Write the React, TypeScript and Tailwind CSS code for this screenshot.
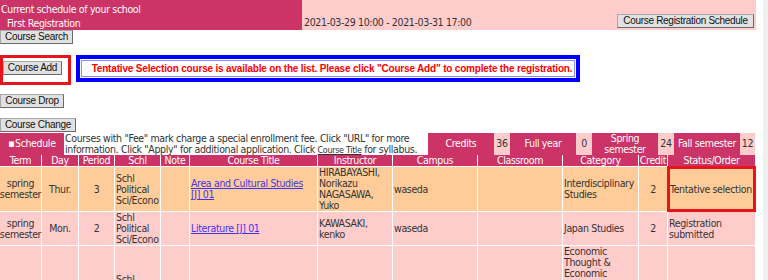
import React from "react";

const FONT = "font-['DejaVu_Sans_Condensed','DejaVu_Sans',sans-serif]";

function Btn({ children, w }: { children: React.ReactNode; w: string }) {
  return (
    <div
      className={`${w} h-[14px] shrink-0 flex items-center justify-center bg-[#e1e1e1] border border-[#a8a8a8] border-r-[#6a6a6a] border-b-[#6a6a6a] text-[10px] leading-[12px] tracking-[-0.3px] text-[#111] whitespace-nowrap font-['Liberation_Sans',Arial,sans-serif]`}
    >
      {children}
    </div>
  );
}

type Align = "c" | "l";

function Cell({
  lines,
  align = "l",
  bg,
  link = false,
  extra = "",
}: {
  lines: string[];
  align?: Align;
  bg: string;
  link?: boolean;
  extra?: string;
}) {
  return (
    <div
      className={`${bg} flex flex-col justify-center ${
        align === "c" ? "items-center text-center" : "items-start pl-[1px]"
      } ${extra}`}
    >
      {lines.map((l, i) => (
        <div
          key={i}
          className={`whitespace-nowrap leading-[11px] ${
            link ? "text-[#4433ee] underline underline-offset-[1px]" : ""
          }`}
        >
          {l}
        </div>
      ))}
    </div>
  );
}

const HEAD = [
  "Term",
  "Day",
  "Period",
  "Schl",
  "Note",
  "Course Title",
  "Instructor",
  "Campus",
  "Classroom",
  "Category",
  "Credit",
  "Status/Order",
];

export default function App() {
  const mag = "bg-[#cc3366]";
  const pink = "bg-[#ffcccc]";
  const orange = "bg-[#ffcc99]";
  return (
    <div
      className={`w-[768px] h-[280px] overflow-hidden bg-white flex ${FONT} text-[10.5px] tracking-[-0.35px] text-[#333]`}
    >
      <div className="w-[756px] shrink-0 flex flex-col">
        {/* top header */}
        <div className="flex h-[30px] shrink-0">
          <div className={`w-[302px] ${mag} text-white`}>
            <div className="leading-[14px] pt-[2px] pl-[1px] whitespace-nowrap">
              Current schedule of your school
            </div>
            <div className="leading-[14px] pl-[7px] whitespace-nowrap">First Registration</div>
          </div>
          <div className={`flex-1 ${pink} flex items-end justify-between pl-[2px] pr-[2px] pb-[2px]`}>
            <span className="leading-[12px] whitespace-nowrap">
              2021-03-29 10:00 - 2021-03-31 17:00
            </span>
            <Btn w="w-[137px]">Course Registration Schedule</Btn>
          </div>
        </div>

        <Btn w="w-[73px]">Course Search</Btn>

        {/* Course add + notice */}
        <div className="flex items-start mt-[11px] h-[30px] shrink-0">
          <div className="w-[71px] h-[30px] border-[3px] border-[#e8141b] pt-[3px]">
            <Btn w="w-[59px]">Course Add</Btn>
          </div>
          <div className="ml-[5px] w-[504px] h-[27px] border-4 border-[#0000ff] p-px">
            <div className="h-full border border-[#8a8aff] flex items-center justify-center">
              <span className="font-['Liberation_Sans',Arial,sans-serif] font-bold text-[#ff0000] text-[10px] tracking-[-0.18px] whitespace-nowrap pl-[8px]">
                Tentative Selection course is available on the list. Please click "Course Add" to
                complete the registration.
              </span>
            </div>
          </div>
        </div>

        <div className="mt-[9px]">
          <Btn w="w-[64px]">Course Drop</Btn>
        </div>
        <div className="mt-[10px]">
          <Btn w="w-[76px]">Course Change</Btn>
        </div>

        {/* schedule row */}
        <div className="flex h-[22px] mt-px shrink-0">
          <div className={`w-[64px] ${mag} text-white flex items-center justify-center whitespace-nowrap`}>
            <span className="text-[7px] mr-px">■</span>Schedule
          </div>
          <div className="w-[364px] flex flex-col justify-center pl-[1px] leading-[11px] whitespace-nowrap">
            <div>Courses with "Fee" mark charge a special enrollment fee. Click "URL" for more</div>
            <div>
              information. Click "Apply" for additional application. Click{" "}
              <span className="underline text-[9px]">Course Title</span> for syllabus.
            </div>
          </div>
          <div className={`w-[66px] ${mag} text-white flex items-center justify-center`}>Credits</div>
          <div className={`w-[16px] ${pink} flex items-center justify-center`}>36</div>
          <div className={`w-[66px] ${mag} text-white flex items-center justify-center`}>Full year</div>
          <div className={`w-[16px] ${pink} flex items-center justify-center`}>0</div>
          <div className={`w-[66px] ${mag} text-white flex flex-col items-center justify-center leading-[11px]`}>
            <div>Spring</div>
            <div>semester</div>
          </div>
          <div className={`w-[16px] ${pink} flex items-center justify-center`}>24</div>
          <div className={`w-[66px] ${mag} text-white flex items-center justify-center whitespace-nowrap`}>
            Fall semester
          </div>
          <div className={`w-[15px] ${pink} flex items-center justify-center`}>12</div>
        </div>

        {/* data grid */}
        <div className="grid grid-cols-[41px_36px_35px_45px_28px_127px_74px_84px_84px_75px_28px_87px] gap-px bg-white w-[755px]">
          {HEAD.map((h) => (
            <div
              key={h}
              className={`${mag} text-white text-center leading-[11px] h-[11px] whitespace-nowrap`}
            >
              {h}
            </div>
          ))}

          {/* row 1 */}
          <Cell bg={orange} align="c" lines={["spring", "semester"]} />
          <Cell bg={orange} align="c" lines={["Thur."]} />
          <Cell bg={orange} align="c" lines={["3"]} />
          <Cell bg={orange} lines={["Schl", "Political", "Sci/Econo"]} />
          <Cell bg={orange} lines={[]} />
          <Cell bg={orange} link lines={["Area and Cultural Studies", "[J] 01"]} />
          <Cell bg={orange} lines={["HIRABAYASHI,", "Norikazu", "NAGASAWA,", "Yuko"]} />
          <Cell bg={orange} lines={["waseda"]} />
          <Cell bg={orange} lines={[]} />
          <Cell bg={orange} lines={["Interdisciplinary", "Studies"]} />
          <Cell bg={orange} align="c" lines={["2"]} />
          <Cell
            bg={orange}
            lines={["Tentative selection"]}
            extra="outline-[3px] outline-solid outline-[#e8141b] outline-offset-[-2px] pl-[2px]"
          />

          {/* row 2 */}
          <Cell bg={pink} align="c" lines={["spring", "semester"]} />
          <Cell bg={pink} align="c" lines={["Mon."]} />
          <Cell bg={pink} align="c" lines={["2"]} />
          <Cell bg={pink} lines={["Schl", "Political", "Sci/Econo"]} />
          <Cell bg={pink} lines={[]} />
          <Cell bg={pink} link lines={["Literature [J] 01"]} />
          <Cell bg={pink} lines={["KAWASAKI,", "kenko"]} />
          <Cell bg={pink} lines={["waseda"]} />
          <Cell bg={pink} lines={[]} />
          <Cell bg={pink} lines={["Japan Studies"]} />
          <Cell bg={pink} align="c" lines={["2"]} />
          <Cell bg={pink} lines={["Registration", "submitted"]} />

          {/* row 3 */}
          <Cell bg={pink} align="c" lines={["spring", "semester"]} />
          <Cell bg={pink} align="c" lines={["Fri."]} />
          <Cell bg={pink} align="c" lines={["1"]} />
          <Cell bg={pink} lines={["Schl", "Political", "Sci/Econo"]} />
          <Cell bg={pink} lines={[]} />
          <Cell bg={pink} link lines={["History of Economic", "Thought [J] 01"]} />
          <Cell bg={pink} lines={["SUZUKI,", "Taro"]} />
          <Cell bg={pink} lines={["waseda"]} />
          <Cell bg={pink} lines={[]} />
          <Cell
            bg={pink}
            lines={[
              "Economic",
              "Thought &",
              "Economic",
              "History/",
              "Economic",
              "Policy and",
              "Public",
              "Economics",
            ]}
          />
          <Cell bg={pink} align="c" lines={["2"]} />
          <Cell bg={pink} lines={["Registration", "submitted"]} />
        </div>
      </div>
      <div className="w-[7px] shrink-0" />
      <div className="flex-1 bg-[#f0f0f0]" />
    </div>
  );
}
